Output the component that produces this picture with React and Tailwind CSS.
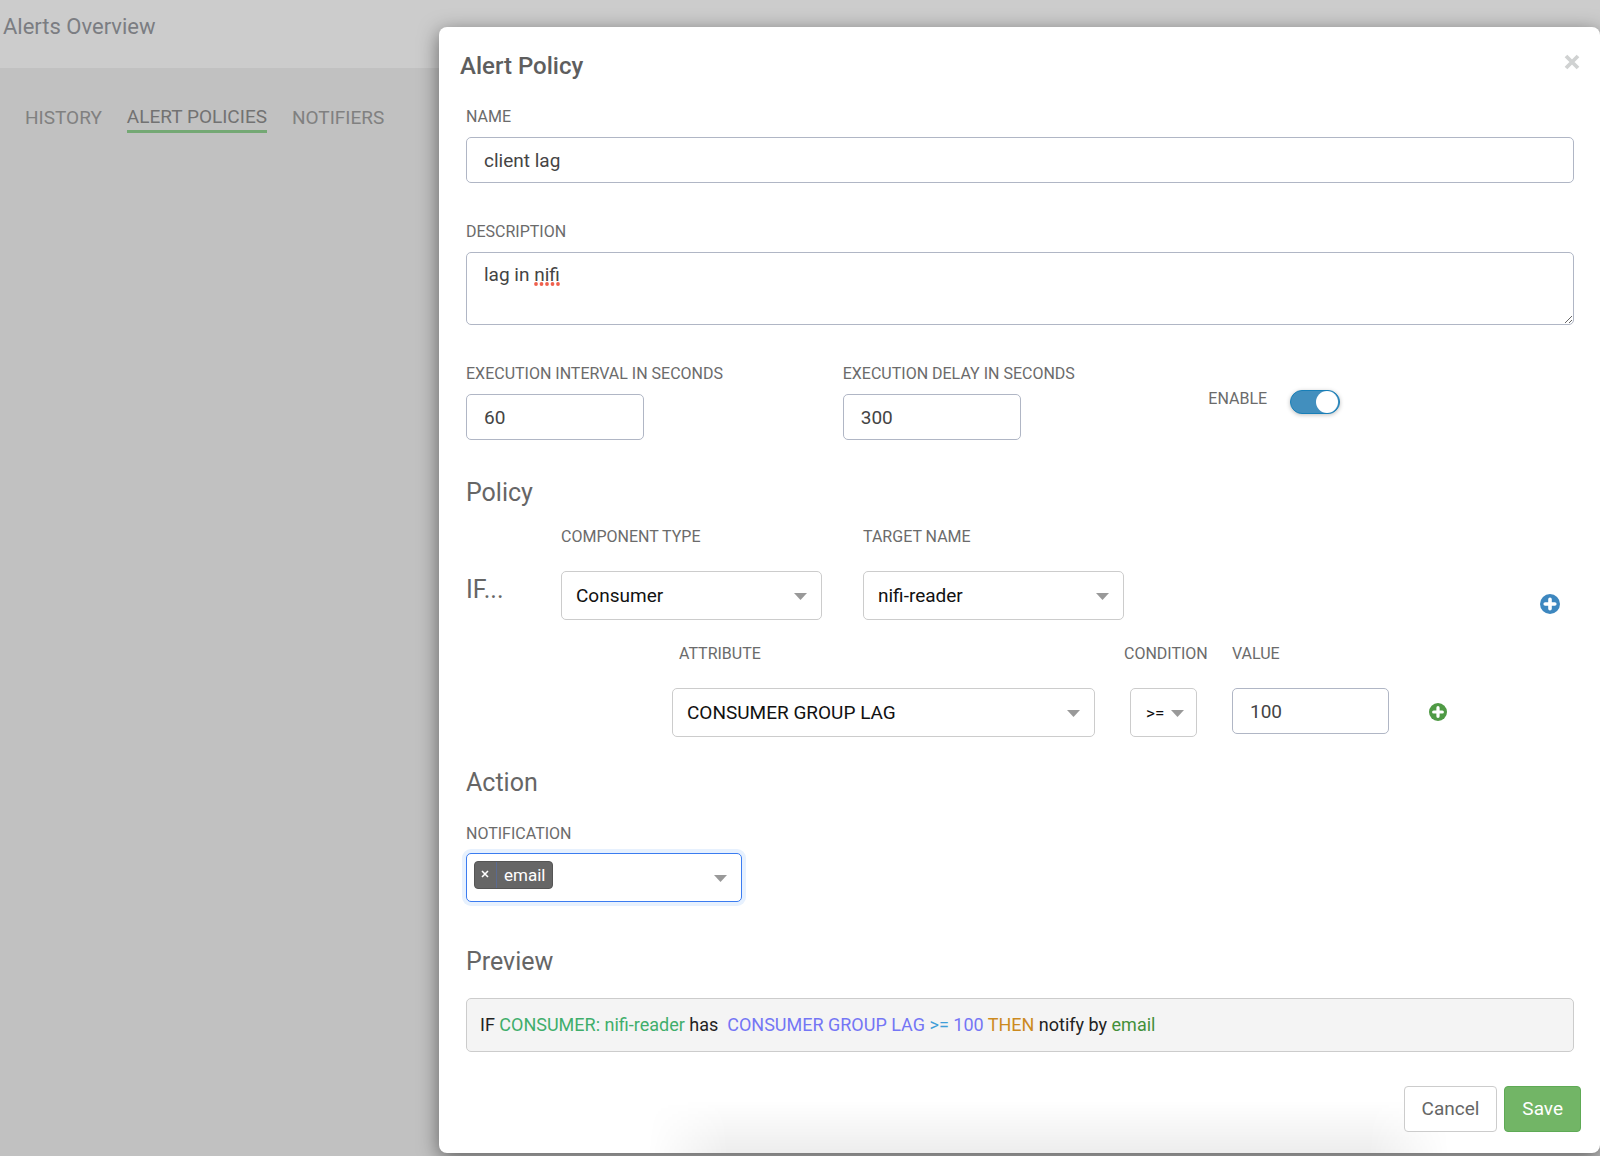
import { useState } from "react";
import clsx from "clsx";

const TABS = ["HISTORY", "ALERT POLICIES", "NOTIFIERS"];

const labelClass = "block text-[16px] leading-5 text-[#6b6b6b]";
const inputClass =
  "block h-[46px] rounded-[5px] border border-[#b0b6c5] bg-white px-[17px] text-[19px] text-[#444] focus:outline-none";

function Caret({ className }) {
  return (
    <svg viewBox="0 0 13 7" className={clsx("pointer-events-none h-[7px] w-[13px] fill-[#999]", className)} aria-hidden="true">
      <path d="M0 0h13L6.5 7z" />
    </svg>
  );
}

function Heading({ children, className }) {
  return <h2 className={clsx("text-[25px] leading-7 text-[#666]", className)}>{children}</h2>;
}

function Select({ id, label, value, options, labelClassName, className, small }) {
  const [selected, setSelected] = useState(value);
  return (
    <div className="flex flex-col gap-6">
      <label htmlFor={id} className={clsx(labelClass, labelClassName)}>{label}</label>
      <div className={clsx("relative", className)}>
        <select
          id={id}
          value={selected}
          onChange={e => setSelected(e.target.value)}
          className={clsx(
            "block h-[49px] w-full appearance-none rounded-[5px] border border-[#ccc] bg-white pt-0.5 text-[#111] focus:outline-none",
            small ? "pl-[15px] text-[17px]" : "px-3.5 text-[19px]"
          )}
        >
          {options.map(o => <option key={o}>{o}</option>)}
        </select>
        <Caret className={clsx("absolute top-[22px]", small ? "right-[13px]" : "right-[15px]")} />
      </div>
    </div>
  );
}

function AddButton({ label, className }) {
  return (
    <button type="button" aria-label={label} className={className}>
      <svg viewBox="0 0 20 20" className="block h-full w-full" aria-hidden="true">
        <circle cx="10" cy="10" r="10" fill="currentColor" />
        <path d="M10 5.2v9.6M5.2 10h9.6" stroke="#fff" strokeWidth="3.6" strokeLinecap="round" />
      </svg>
    </button>
  );
}

function NotificationSelect() {
  const [notifiers, setNotifiers] = useState(["email"]);
  return (
    <div className="relative flex h-[49px] w-[276px] items-start gap-2 rounded-[5px] border border-[#3b7cf0] bg-white p-[7px] pr-10 ring-4 ring-[#e7f1fe]">
      {notifiers.map(n => (
        <span key={n} className="flex h-7 items-stretch rounded-sm border border-[#555] bg-[#666] text-[17px] leading-[26px] text-white">
          <button
            type="button"
            aria-label={`Remove ${n}`}
            onClick={() => setNotifiers(prev => prev.filter(x => x !== n))}
            className="flex w-[22px] items-center border-r border-[#5a6a90] pb-0.5 pl-1.5"
          >
            <svg viewBox="0 0 8 8" className="h-2 w-2" aria-hidden="true">
              <path d="M1 1l6 6M7 1L1 7" stroke="#fff" strokeWidth="1.6" />
            </svg>
          </button>
          <span className="px-[7px]">{n}</span>
        </span>
      ))}
      <input id="notification" className="h-7 min-w-0 flex-1 focus:outline-none" />
      <Caret className="absolute top-[21px] right-3.5" />
    </div>
  );
}

function Preview() {
  return (
    <p className="mt-[22px] rounded-[5px] border border-[#ccc] bg-[#f4f4f4] px-[13px] py-3 text-[18px] leading-7 whitespace-pre-wrap text-[#222]">
      IF <span className="text-[#3fae6b]">CONSUMER: nifi-reader</span> has{"  "}
      <span className="text-[#7476f5]">CONSUMER GROUP LAG</span> <span className="text-[#3f9ed8]">&gt;=</span>{" "}
      <span className="text-[#7476f5]">100</span> <span className="text-[#cc8a1e]">THEN</span> notify by{" "}
      <span className="text-[#43903a]">email</span>
    </p>
  );
}

function AlertPolicyModal() {
  const [name, setName] = useState("client lag");
  const [description, setDescription] = useState("lag in nifi");
  const [interval, setInterval] = useState("60");
  const [delay, setDelay] = useState("300");
  const [value, setValue] = useState("100");
  const [enabled, setEnabled] = useState(true);

  return (
    <form
      role="dialog"
      aria-labelledby="modal-title"
      onSubmit={e => e.preventDefault()}
      className="relative ml-[439px] flex-1 overflow-hidden rounded-lg bg-white pt-[25px] pr-[26px] pb-[21px] pl-[27px] shadow-[0_5px_20px_rgba(0,0,0,0.5)]"
    >
      {/* soft shade along the bottom edge */}
      <div className="pointer-events-none absolute bottom-0 left-[18%] h-[52px] w-[69%] bg-linear-to-t from-black/7 to-transparent mask-x-from-90% mask-x-to-100%" />

      <div className="relative">
        <header className="-ml-1.5 flex items-start justify-between">
          <h1 id="modal-title" className="text-2xl leading-7 font-medium text-[#5e5e5e]">Alert Policy</h1>
          <button type="button" aria-label="Close" className="-mr-2 p-0.5">
            <svg viewBox="0 0 16 16" className="h-4 w-4" aria-hidden="true">
              <path d="M2 2l12 12M14 2L2 14" stroke="#d0d2d2" strokeWidth="3.8" />
            </svg>
          </button>
        </header>

        <div className="mt-[27px] flex flex-col gap-2.5">
          <label htmlFor="name" className={labelClass}>NAME</label>
          <input id="name" value={name} onChange={e => setName(e.target.value)} className={clsx(inputClass, "w-full")} />
        </div>

        <div className="mt-[39px] flex flex-col gap-2.5">
          <label htmlFor="description" className={labelClass}>DESCRIPTION</label>
          <div className="relative">
            <textarea
              id="description"
              value={description}
              spellCheck={false}
              onChange={e => setDescription(e.target.value)}
              className="block h-[73px] w-full resize rounded-[5px] border border-[#b0b6c5] px-[17px] py-2 text-[19px] leading-7 text-[#444] focus:outline-none"
            />
            {/* spelling marks under the last word */}
            <svg viewBox="0 0 26 4" className="pointer-events-none absolute top-[30px] left-[68px] h-1 w-[26px] fill-[#f0604d]" aria-hidden="true">
              {[2, 7.5, 13, 18.5, 24].map(x => <circle key={x} cx={x} cy="2" r="1.9" />)}
            </svg>
          </div>
        </div>

        <div className="mt-[39px] grid grid-cols-[34%_33%_33%]">
          <div className="flex flex-col gap-2.5">
            <label htmlFor="interval" className={labelClass}>EXECUTION INTERVAL IN SECONDS</label>
            <input id="interval" value={interval} onChange={e => setInterval(e.target.value)} className={clsx(inputClass, "w-[178px]")} />
          </div>
          <div className="flex flex-col gap-2.5">
            <label htmlFor="delay" className={labelClass}>EXECUTION DELAY IN SECONDS</label>
            <input id="delay" value={delay} onChange={e => setDelay(e.target.value)} className={clsx(inputClass, "w-[178px]")} />
          </div>
          <div className="flex items-start pt-[25px]">
            <label htmlFor="enable" className={clsx(labelClass, "w-[82px]")}>ENABLE</label>
            <input
              id="enable"
              type="checkbox"
              role="switch"
              checked={enabled}
              onChange={e => setEnabled(e.target.checked)}
              className="mt-px flex h-6 w-[50px] appearance-none items-center rounded-full border border-[#ccc] bg-[#ddd] px-px shadow-[0_1px_4px_rgba(0,0,0,0.25)] before:size-[22px] before:rounded-full before:bg-white checked:justify-end checked:border-[#187fb8] checked:bg-[#428fbe]"
            />
          </div>
        </div>

        <Heading className="mt-[39px]">Policy</Heading>
        <div className="mt-5 flex">
          <Heading className="w-[95px] pt-[49px]">IF...</Heading>
          <div className="flex flex-1 gap-[41px]">
            <Select id="component" label="COMPONENT TYPE" value="Consumer" options={["Consumer", "Producer", "Topic", "Cluster"]} className="w-[261px]" />
            <Select id="target" label="TARGET NAME" value="nifi-reader" options={["nifi-reader"]} className="w-[261px]" />
          </div>
          <AddButton label="Add component" className="mt-[67px] mr-3.5 h-5 w-5 text-[#3d87bf]" />
        </div>

        <div className="mt-6 flex pl-[206px]">
          <Select id="attribute" label="ATTRIBUTE" value="CONSUMER GROUP LAG" options={["CONSUMER GROUP LAG"]} labelClassName="pl-[7px]" className="w-[423px]" />
          <div className="ml-[29px] w-[108px]">
            <Select id="condition" label="CONDITION" value=">=" options={[">=", "<=", ">", "<", "="]} className="ml-1.5 w-[67px]" small />
          </div>
          <div className="flex flex-col gap-6">
            <label htmlFor="value" className={labelClass}>VALUE</label>
            <input id="value" value={value} onChange={e => setValue(e.target.value)} className={clsx(inputClass, "w-[157px]")} />
          </div>
          <AddButton label="Add attribute" className="mt-[59px] ml-10 h-[18px] w-[18px] text-[#4f9a45]" />
        </div>

        <Heading className="mt-8">Action</Heading>
        <div className="mt-[27px] flex flex-col gap-[9px]">
          <label htmlFor="notification" className={labelClass}>NOTIFICATION</label>
          <NotificationSelect />
        </div>

        <Heading className="mt-[46px]">Preview</Heading>
        <Preview />

        <footer className="mt-[34px] -mr-[7px] flex justify-end gap-[7px] text-[19px]">
          <button type="button" className="h-[46px] rounded-[4px] border border-[#ccc] bg-white px-[17px] text-[#666]">Cancel</button>
          <button type="submit" className="h-[46px] rounded-[4px] border border-[#5eaa55] bg-[#72b566] px-[17px] text-white">Save</button>
        </footer>
      </div>
    </form>
  );
}

export default function App() {
  return (
    <div className="relative min-h-screen bg-[#c1c1c1] font-[Roboto,sans-serif]">
      <header className="bg-[#cccccc] px-[3px] pt-[13px] pb-[27px] text-[22px] leading-7 text-[#7b7d82]">Alerts Overview</header>
      <nav className="flex items-start gap-[25px] px-[25px] pt-9 text-[19px] leading-[26px] text-[#808080]">
        {TABS.map(tab => (
          <a key={tab} href="#" className={clsx(tab === "ALERT POLICIES" ? "border-b-3 border-[#74a874] text-[#727272]" : "pt-px")}>
            {tab}
          </a>
        ))}
      </nav>
      <div className="absolute inset-x-0 top-0 flex pt-[27px]">
        <AlertPolicyModal />
      </div>
    </div>
  );
}
